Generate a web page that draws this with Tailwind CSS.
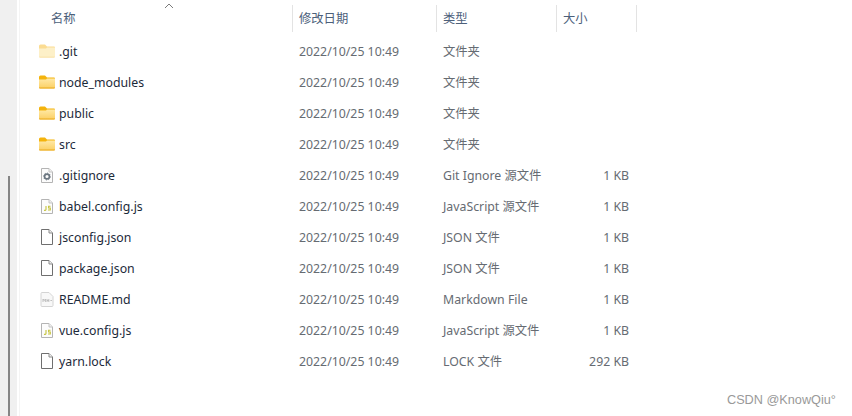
<!DOCTYPE html>
<html lang="zh-CN">
  <head>
    <meta charset="UTF-8" />
    <title>文件列表</title>
    <script src="https://cdn.jsdelivr.net/npm/@tailwindcss/browser@4"></script>
  </head>
  <body class="bg-white">
    <svg width="0" height="0" class="absolute">
      <defs>
        <linearGradient id="fg" x1="0" y1="0" x2="0" y2="1">
          <stop offset="0" stop-color="#ffe9a6" />
          <stop offset="1" stop-color="#fbcf63" />
        </linearGradient>
        <symbol id="folder" viewBox="0 0 16 14">
          <path d="M0 2 Q0 .5 1.5 .5 H6 L8 2.5 H15 Q16 2.5 16 3.5 V5 H0 Z" fill="#f4b30c" />
          <path d="M0 4.5 H7 L8 3.5 H16 V12.5 Q16 13.5 15 13.5 H1 Q0 13.5 0 12.5 Z" fill="url(#fg)" />
          <path d="M0 12.5 H16 V12.8 Q16 13.5 15 13.5 H1 Q0 13.5 0 12.8 Z" fill="#e9a91c" />
        </symbol>
        <symbol id="folder-hidden" viewBox="0 0 16 14">
          <path d="M0 2 Q0 .5 1.5 .5 H6 L8 2.5 H15 Q16 2.5 16 3.5 V5 H0 Z" fill="#fbdc92" />
          <path d="M0 4.5 H7 L8 3.5 H16 V12.5 Q16 13.5 15 13.5 H1 Q0 13.5 0 12.5 Z" fill="#fdf0c8" />
          <path d="M0 12.7 H16 Q16 13.5 15 13.5 H1 Q0 13.5 0 12.7 Z" fill="#f8dc98" />
        </symbol>
        <symbol id="blank" viewBox="0 0 12 16">
          <path d="M.5 .5 H8 L11.5 4 V15.5 H.5 Z" fill="#fff" stroke="#6f6f6f" />
          <path d="M8 .5 V4 H11.5" fill="#f2f2f2" stroke="#8a8a8a" />
        </symbol>
        <symbol id="page-light" viewBox="0 0 12 15">
          <path d="M.5 .5 H8 L11.5 4 V14.5 H.5 Z" fill="#fcfcfc" stroke="#b4b4b4" />
          <path d="M8 .5 V4 H11.5" fill="#eeeeee" stroke="#c4c4c4" />
        </symbol>
      </defs>
    </svg>

    <div class="flex h-[416px] w-[852px] overflow-hidden bg-white font-['Noto_Sans','Noto_Sans_CJK_SC',sans-serif] text-[12.3px] text-[#666b72]">
      <div class="flex h-full w-[17px] shrink-0 justify-center bg-[#f0f0f0] pt-[176px]">
        <div class="h-full w-[2px] bg-[#858585]"></div>
      </div>
      <div class="ml-[2px] h-full w-px shrink-0 bg-[#f4f4f4]"></div>

      <div class="w-[618px] shrink-0 pt-[5px]">
        <div class="flex h-[27px] items-center text-[#4c607a]">
          <div class="relative flex h-full w-[272px] items-center pt-[2px] pl-[31px]">
            名称
            <svg class="absolute -top-[2px] left-[144px]" width="10" height="6" viewBox="0 0 10 6" fill="none" stroke="#7a7a7a"><path d="M1 5 L5 1 L9 5" /></svg>
          </div>
          <div class="flex h-full w-[144px] items-center border-l border-[#e3e3e3] pt-[2px] pl-[6px]">修改日期</div>
          <div class="flex h-full w-[120px] items-center border-l border-[#e3e3e3] pt-[2px] pl-[6px]">类型</div>
          <div class="flex h-full w-[81px] items-center border-x border-[#e3e3e3] pt-[2px] pl-[6px]">大小</div>
        </div>

        <div class="mt-[5px]">
          <div class="flex h-[31px] items-center">
            <div class="flex w-[272px] items-center pl-[19px] text-[#1c2a3a]"><svg class="mr-[4px] mb-[3px] h-[14px] w-[16px]"><use href="#folder-hidden" /></svg>.git</div>
            <div class="w-[144px] pl-[7px]">2022/10/25 10:49</div>
            <div class="w-[120px] pl-[7px]">文件夹</div>
          </div>
          <div class="flex h-[31px] items-center">
            <div class="flex w-[272px] items-center pl-[19px] text-[#1c2a3a]"><svg class="mr-[4px] mb-[3px] h-[14px] w-[16px]"><use href="#folder" /></svg>node_modules</div>
            <div class="w-[144px] pl-[7px]">2022/10/25 10:49</div>
            <div class="w-[120px] pl-[7px]">文件夹</div>
          </div>
          <div class="flex h-[31px] items-center">
            <div class="flex w-[272px] items-center pl-[19px] text-[#1c2a3a]"><svg class="mr-[4px] mb-[3px] h-[14px] w-[16px]"><use href="#folder" /></svg>public</div>
            <div class="w-[144px] pl-[7px]">2022/10/25 10:49</div>
            <div class="w-[120px] pl-[7px]">文件夹</div>
          </div>
          <div class="flex h-[31px] items-center">
            <div class="flex w-[272px] items-center pl-[19px] text-[#1c2a3a]"><svg class="mr-[4px] mb-[3px] h-[14px] w-[16px]"><use href="#folder" /></svg>src</div>
            <div class="w-[144px] pl-[7px]">2022/10/25 10:49</div>
            <div class="w-[120px] pl-[7px]">文件夹</div>
          </div>
          <div class="flex h-[31px] items-center">
            <div class="flex w-[272px] items-center pl-[21px] text-[#1c2a3a]">
              <svg class="mr-[6px] mb-[3px] h-[15px] w-[12px]" viewBox="0 0 12 15">
                <use href="#page-light" />
                <circle cx="6" cy="8.5" r="2.4" fill="none" stroke="#6b7680" stroke-width="1.6" />
                <circle cx="6" cy="8.5" r="3.4" fill="none" stroke="#6b7680" stroke-width="1" stroke-dasharray="1.2 1.4" />
              </svg>.gitignore
            </div>
            <div class="w-[144px] pl-[7px]">2022/10/25 10:49</div>
            <div class="w-[120px] pl-[7px]">Git Ignore 源文件</div>
            <div class="w-[80px] pr-[7px] text-right">1 KB</div>
          </div>
          <div class="flex h-[31px] items-center">
            <div class="flex w-[272px] items-center pl-[21px] text-[#1c2a3a]">
              <svg class="mr-[6px] mb-[3px] h-[15px] w-[12px]" viewBox="0 0 12 15">
                <use href="#page-light" />
                <path d="M5 7 V10.5 Q5 11.5 3 11.3" fill="none" stroke="#c4c23a" stroke-width="1.1" />
                <path d="M9.5 7.3 H7.6 V9 H9.3 V11 H7" fill="none" stroke="#c4c23a" stroke-width="1.1" />
              </svg>babel.config.js
            </div>
            <div class="w-[144px] pl-[7px]">2022/10/25 10:49</div>
            <div class="w-[120px] pl-[7px]">JavaScript 源文件</div>
            <div class="w-[80px] pr-[7px] text-right">1 KB</div>
          </div>
          <div class="flex h-[31px] items-center">
            <div class="flex w-[272px] items-center pl-[21px] text-[#1c2a3a]"><svg class="mr-[6px] mb-[3px] h-[16px] w-[12px]"><use href="#blank" /></svg>jsconfig.json</div>
            <div class="w-[144px] pl-[7px]">2022/10/25 10:49</div>
            <div class="w-[120px] pl-[7px]">JSON 文件</div>
            <div class="w-[80px] pr-[7px] text-right">1 KB</div>
          </div>
          <div class="flex h-[31px] items-center">
            <div class="flex w-[272px] items-center pl-[21px] text-[#1c2a3a]"><svg class="mr-[6px] mb-[3px] h-[16px] w-[12px]"><use href="#blank" /></svg>package.json</div>
            <div class="w-[144px] pl-[7px]">2022/10/25 10:49</div>
            <div class="w-[120px] pl-[7px]">JSON 文件</div>
            <div class="w-[80px] pr-[7px] text-right">1 KB</div>
          </div>
          <div class="flex h-[31px] items-center">
            <div class="flex w-[272px] items-center pl-[20px] text-[#1c2a3a]">
              <svg class="mr-[5px] mb-[3px] h-[15px] w-[14px]" viewBox="0 0 14 15">
                <path d="M1 1.5 Q1 .5 2 .5 H9 L13 4.5 V13.5 Q13 14.5 12 14.5 H2 Q1 14.5 1 13.5 Z" fill="#f8f8f8" stroke="#d4d4d4" />
                <path d="M3 10 V7 L4.2 8.6 L5.4 7 V10 M7 10 V7 M7 8.5 H8.8 M8.8 7 V10 M10.4 8.5 H12" fill="none" stroke="#b9b9b9" stroke-width=".9" />
              </svg>README.md
            </div>
            <div class="w-[144px] pl-[7px]">2022/10/25 10:49</div>
            <div class="w-[120px] pl-[7px]">Markdown File</div>
            <div class="w-[80px] pr-[7px] text-right">1 KB</div>
          </div>
          <div class="flex h-[31px] items-center">
            <div class="flex w-[272px] items-center pl-[21px] text-[#1c2a3a]">
              <svg class="mr-[6px] mb-[3px] h-[15px] w-[12px]" viewBox="0 0 12 15">
                <use href="#page-light" />
                <path d="M5 7 V10.5 Q5 11.5 3 11.3" fill="none" stroke="#c4c23a" stroke-width="1.1" />
                <path d="M9.5 7.3 H7.6 V9 H9.3 V11 H7" fill="none" stroke="#c4c23a" stroke-width="1.1" />
              </svg>vue.config.js
            </div>
            <div class="w-[144px] pl-[7px]">2022/10/25 10:49</div>
            <div class="w-[120px] pl-[7px]">JavaScript 源文件</div>
            <div class="w-[80px] pr-[7px] text-right">1 KB</div>
          </div>
          <div class="flex h-[31px] items-center">
            <div class="flex w-[272px] items-center pl-[21px] text-[#1c2a3a]"><svg class="mr-[6px] mb-[3px] h-[16px] w-[12px]"><use href="#blank" /></svg>yarn.lock</div>
            <div class="w-[144px] pl-[7px]">2022/10/25 10:49</div>
            <div class="w-[120px] pl-[7px]">LOCK 文件</div>
            <div class="w-[80px] pr-[7px] text-right">292 KB</div>
          </div>
        </div>
      </div>
    </div>

    <div class="absolute top-[392px] left-[727px] font-['Liberation_Sans',sans-serif] text-[12.7px] leading-[16px] text-[#999999]">CSDN @KnowQiu°</div>
  </body>
</html>
